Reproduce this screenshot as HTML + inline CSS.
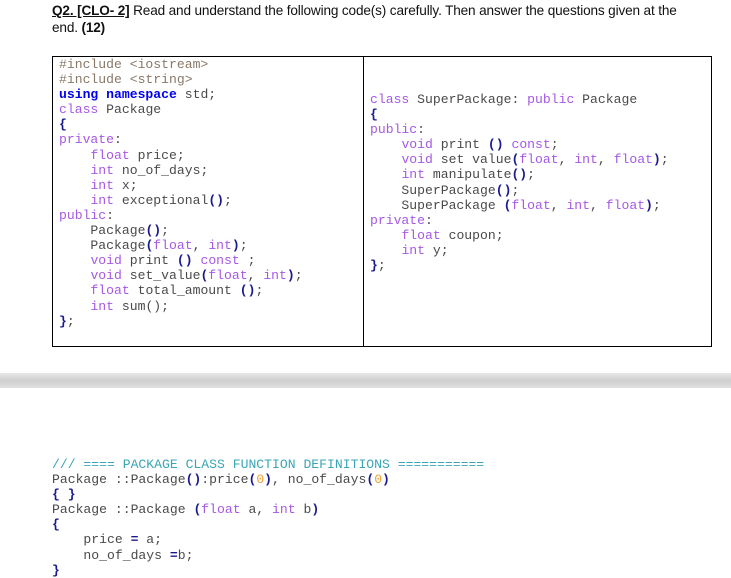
<!DOCTYPE html>
<html><head><meta charset="utf-8"><style>
body{margin:0;width:731px;height:578px;background:#fff;position:relative;overflow:hidden}
.h{position:absolute;left:52px;font-family:"Liberation Sans",sans-serif;font-size:13.6px;color:#111;letter-spacing:-0.15px;white-space:nowrap}
pre{position:absolute;margin:0;font-family:"Liberation Mono",monospace;font-size:13.1px;line-height:15.1px;color:#4a4a4a}
.k{color:#a658e6}.b{color:#1a1a90;font-weight:bold}.u{color:#0000ee;font-weight:bold}.i{color:#8a7868}.c{color:#3aa5b5}.n{color:#f0a030}
</style></head><body>
<div class="h" style="top:3px"><b><u>Q2. [CLO- 2]</u></b> Read and understand the following code(s) carefully. Then answer the questions given at the</div>
<div class="h" style="top:20px">end. <b>(12)</b></div>
<div style="position:absolute;left:52px;top:56px;width:658px;height:289px;border:1px solid #000"></div>
<div style="position:absolute;left:363px;top:57px;width:1px;height:289px;background:#000"></div>
<pre style="left:59px;top:57px"><span class="i">#include &lt;iostream&gt;</span>
<span class="i">#include &lt;string&gt;</span>
<span class="u">using namespace</span> std;
<span class="k">class</span> Package
<span class="b">{</span>
<span class="k">private</span>:
    <span class="k">float</span> price;
    <span class="k">int</span> no_of_days;
    <span class="k">int</span> x;
    <span class="k">int</span> exceptional<span class="b">()</span>;
<span class="k">public</span>:
    Package<span class="b">()</span>;
    Package<span class="b">(</span><span class="k">float</span>, <span class="k">int</span><span class="b">)</span>;
    <span class="k">void</span> print <span class="b">()</span> <span class="k">const</span> ;
    <span class="k">void</span> set_value<span class="b">(</span><span class="k">float</span>, <span class="k">int</span><span class="b">)</span>;
    <span class="k">float</span> total_amount <span class="b">()</span>;
    <span class="k">int</span> sum();
<span class="b">}</span>;</pre>
<pre style="left:370px;top:92px"><span class="k">class</span> SuperPackage: <span class="k">public</span> Package
<span class="b">{</span>
<span class="k">public</span>:
    <span class="k">void</span> print <span class="b">()</span> <span class="k">const</span>;
    <span class="k">void</span> set value<span class="b">(</span><span class="k">float</span>, <span class="k">int</span>, <span class="k">float</span><span class="b">)</span>;
    <span class="k">int</span> manipulate<span class="b">()</span>;
    SuperPackage<span class="b">()</span>;
    SuperPackage <span class="b">(</span><span class="k">float</span>, <span class="k">int</span>, <span class="k">float</span><span class="b">)</span>;
<span class="k">private</span>:
    <span class="k">float</span> coupon;
    <span class="k">int</span> y;
<span class="b">}</span>;</pre>
<div style="position:absolute;left:0;top:373px;width:731px;height:15px;background:linear-gradient(#e8e8e8,#cfcfcf 50%,#e0e0e0)"></div>
<pre style="left:52px;top:457px"><span class="c">/// ==== PACKAGE CLASS FUNCTION DEFINITIONS ===========</span>
Package ::Package<span class="b">()</span>:price<span class="b">(</span><span class="n">0</span><span class="b">)</span>, no_of_days<span class="b">(</span><span class="n">0</span><span class="b">)</span>
<span class="b">{ }</span>
Package ::Package <span class="b">(</span><span class="k">float</span> a, <span class="k">int</span> b<span class="b">)</span>
<span class="b">{</span>
    price <span class="b">=</span> a;
    no_of_days <span class="b">=</span>b;
<span class="b">}</span></pre>
</body></html>
